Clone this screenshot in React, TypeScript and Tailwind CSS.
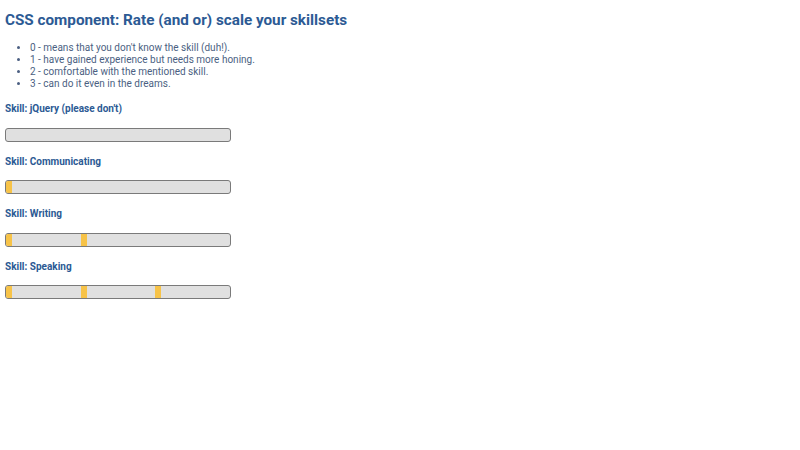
const levels = [
  "0 - means that you don't know the skill (duh!).",
  "1 - have gained experience but needs more honing.",
  "2 - comfortable with the mentioned skill.",
  "3 - can do it even in the dreams.",
];

const skills = [
  { name: "jQuery (please don't)", rate: 0 },
  { name: "Communicating", rate: 1 },
  { name: "Writing", rate: 2 },
  { name: "Speaking", rate: 3 },
];

function RateBar({ rate }: { rate: number }) {
  return (
    <div className="flex w-[226px] h-[14px] border border-[#7a7a7a] rounded-[3px] bg-[#e0e0e0] overflow-hidden">
      {[1, 2, 3].map(i => (
        <div key={i} className="flex-1 flex">
          {i <= rate && <div className="w-[6px] h-full bg-[#f7c348]" />}
        </div>
      ))}
    </div>
  );
}

export default function App() {
  return (
    <div className="bg-white min-h-[450px] px-[5px] pt-[10px] font-['Roboto',sans-serif]">
      <h1 className="text-[15.25px] font-bold leading-[20px] text-[#2c5a94]">
        CSS component: Rate (and or) scale your skillsets
      </h1>
      <ul className="list-disc pl-[25px] mt-[12px] text-[10px] leading-[12px] text-[#4b5f82]">
        {levels.map(l => (
          <li key={l}>{l}</li>
        ))}
      </ul>
      {skills.map((s, i) => (
        <div key={s.name} className={i === 0 ? "mt-[12px]" : "mt-[13px]"}>
          <h2 className="text-[10px] font-bold leading-[13px] text-[#2c5a94]">Skill: {s.name}</h2>
          <div className="mt-[12.5px]">
            <RateBar rate={s.rate} />
          </div>
        </div>
      ))}
    </div>
  );
}
